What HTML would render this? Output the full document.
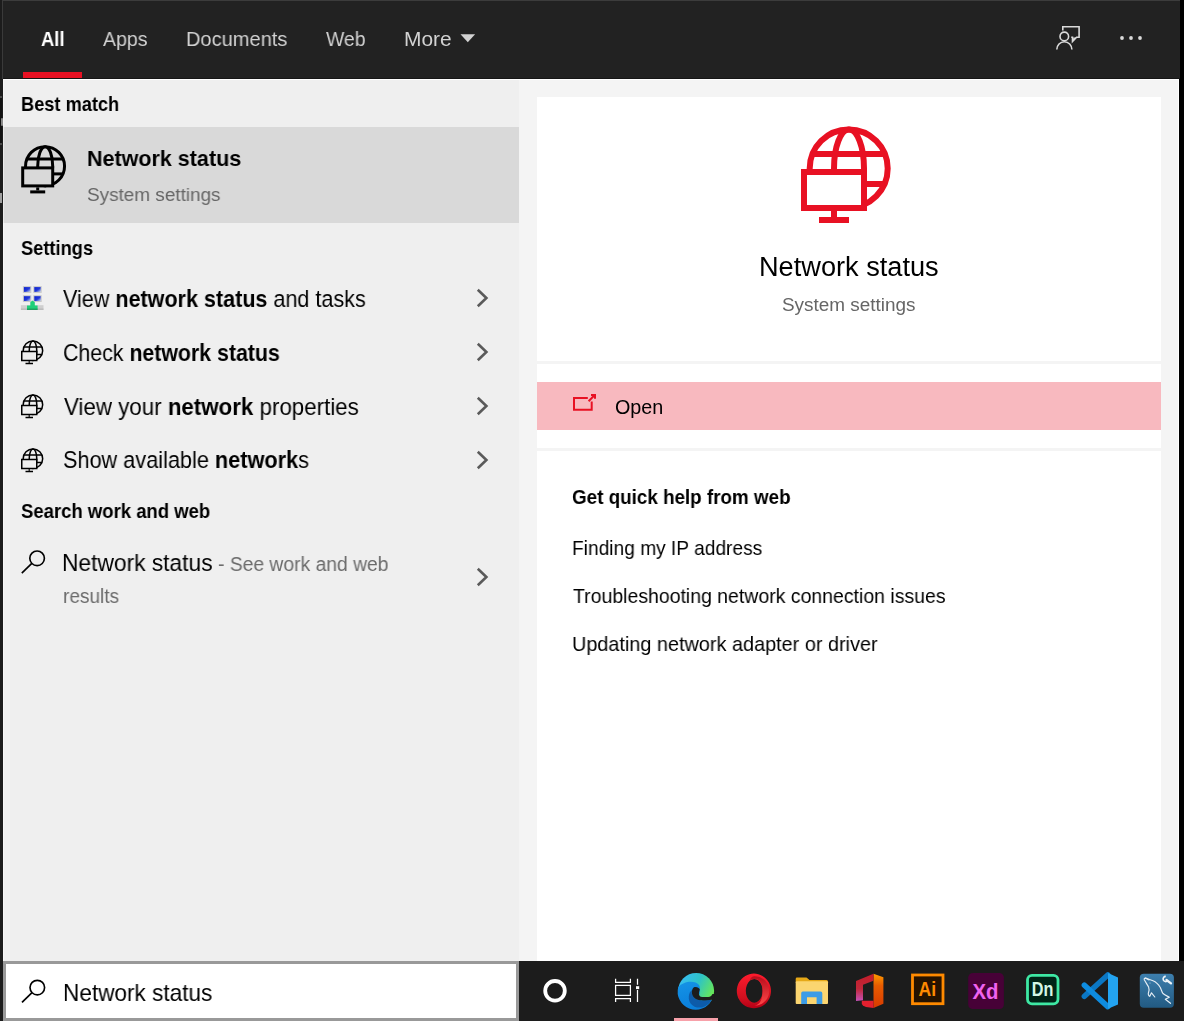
<!DOCTYPE html>
<html><head><meta charset="utf-8"><style>
*{margin:0;padding:0;box-sizing:border-box}
html,body{width:1184px;height:1021px;overflow:hidden;background:#1b1b1b;position:relative;font-family:"Liberation Sans",sans-serif}
.a{position:absolute}
.t{position:absolute;line-height:1;white-space:nowrap;transform-origin:0 0;will-change:transform}
.t b{font-weight:700}
svg{position:absolute;overflow:visible}


</style></head><body>
<!-- outer frame -->
<div class="a" style="left:0;top:0;width:3px;height:1021px;background:#1c1c1c"></div>
<div class="a" style="left:0;top:97px;width:2px;height:47px;background:#121212"></div>
<div class="a" style="left:0;top:96px;width:2px;height:2px;background:#4a4a4a"></div>
<div class="a" style="left:1px;top:118px;width:2px;height:8px;background:#8a8a8a;border-radius:1px"></div>
<div class="a" style="left:0;top:143px;width:2px;height:2px;background:#4a4a4a"></div>
<div class="a" style="left:0;top:193px;width:2px;height:10px;background:#a0a0a0"></div>
<div class="a" style="left:1179px;top:0;width:5px;height:961px;background:#000"></div>
<!-- header -->
<div class="a" style="left:2px;top:0;width:1178px;height:79px;background:#222222;border-left:1px solid #3a3a3a;border-top:1px solid #3c3c3c"></div>
<div class="a" style="left:3px;top:78px;width:1177px;height:1px;background:#161616"></div>
<div class="a" style="left:23px;top:72px;width:59px;height:6px;background:#e81123"></div>
<!-- tab triangle -->
<svg style="left:0;top:0" width="1184" height="80"><path d="M460.5 34.3 L475.1 34.3 L467.8 42.3 Z" fill="#d2d2d2"/></svg>
<!-- feedback icon + dots -->
<svg style="left:0;top:0" width="1184" height="80" fill="none" stroke="#dadada" stroke-width="1.6">
 <path d="M1062.8 30.6 V26.7 H1079.1 V37.3 H1076.6 L1072.5 41.6 V37.3 H1071.2"/>
 <path d="M1073.3 37.6 L1076.3 37.6 L1072.9 41.2 Z" fill="#dadada" stroke="none"/>
 <circle cx="1064.3" cy="36.4" r="4.3"/>
 <path d="M1056.8 49.6 A7.55 7.9 0 0 1 1071.9 49.6"/>
 <circle cx="1122" cy="38" r="1.9" fill="#dadada" stroke="none"/>
 <circle cx="1131" cy="38" r="1.9" fill="#dadada" stroke="none"/>
 <circle cx="1140" cy="38" r="1.9" fill="#dadada" stroke="none"/>
</svg>
<!-- left panel -->
<div class="a" style="left:3px;top:79px;width:516px;height:882px;background:#efefef;border-top:1px solid #fff"></div>
<div class="a" style="left:3px;top:127px;width:516px;height:96px;background:#d9d9d9"></div>
<div class="a" style="left:3px;top:80px;width:1px;height:881px;background:rgba(255,255,255,0.45)"></div>
<!-- right panel -->
<div class="a" style="left:519px;top:79px;width:660px;height:882px;background:#f4f4f4;border-top:1px solid #fff;border-right:1px solid #fff"></div>
<div class="a" style="left:537px;top:97px;width:624px;height:264px;background:#fff"></div>
<div class="a" style="left:537px;top:364px;width:624px;height:84px;background:#fff"></div>
<div class="a" style="left:537px;top:382px;width:624px;height:48px;background:#f8b9bf"></div>
<div class="a" style="left:537px;top:451px;width:624px;height:510px;background:#fff"></div>
<!-- taskbar -->
<div class="a" style="left:0;top:961px;width:1184px;height:60px;background:#1c1c1c"></div>
<div class="a" style="left:3px;top:961px;width:516px;height:60px;background:#fff;border:3px solid #999"></div>

<svg style="left:0;top:0" width="1184" height="1021"><g transform="translate(801 126) scale(1.0)" fill="none" stroke="#e81123" stroke-width="6">
<circle cx="47.7" cy="42.5" r="39"/>
<ellipse cx="48" cy="42.5" rx="15" ry="39"/>
<line x1="11.5" y1="28" x2="83.9" y2="28"/>
<line x1="63" y1="58" x2="83.5" y2="58"/>
<rect x="3" y="46" width="60" height="36" fill="#fff"/>
<rect x="30" y="85" width="6" height="6" fill="#e81123" stroke="none"/>
<rect x="18" y="91" width="30" height="6" fill="#e81123" stroke="none"/>
</g></svg>
<svg style="left:0;top:0" width="1184" height="1021"><g transform="translate(21.2 144.9) scale(0.5)" fill="none" stroke="#000" stroke-width="6">
<circle cx="47.7" cy="42.5" r="39"/>
<ellipse cx="48" cy="42.5" rx="15" ry="39"/>
<line x1="11.5" y1="28" x2="83.9" y2="28"/>
<line x1="63" y1="58" x2="83.5" y2="58"/>
<rect x="3" y="46" width="60" height="36" fill="#d9d9d9"/>
<rect x="30" y="85" width="6" height="6" fill="#000" stroke="none"/>
<rect x="18" y="91" width="30" height="6" fill="#000" stroke="none"/>
</g></svg>
<svg style="left:0;top:0" width="1184" height="1021"><g transform="translate(21 340) scale(0.25)" fill="none" stroke="#000" stroke-width="6">
<circle cx="47.7" cy="42.5" r="39"/>
<ellipse cx="48" cy="42.5" rx="15" ry="39"/>
<line x1="11.5" y1="28" x2="83.9" y2="28"/>
<line x1="63" y1="58" x2="83.5" y2="58"/>
<rect x="3" y="46" width="60" height="36" fill="#efefef"/>
<rect x="30" y="85" width="6" height="6" fill="#000" stroke="none"/>
<rect x="18" y="91" width="30" height="6" fill="#000" stroke="none"/>
</g></svg>
<svg style="left:0;top:0" width="1184" height="1021"><g transform="translate(21 394) scale(0.25)" fill="none" stroke="#000" stroke-width="6">
<circle cx="47.7" cy="42.5" r="39"/>
<ellipse cx="48" cy="42.5" rx="15" ry="39"/>
<line x1="11.5" y1="28" x2="83.9" y2="28"/>
<line x1="63" y1="58" x2="83.5" y2="58"/>
<rect x="3" y="46" width="60" height="36" fill="#efefef"/>
<rect x="30" y="85" width="6" height="6" fill="#000" stroke="none"/>
<rect x="18" y="91" width="30" height="6" fill="#000" stroke="none"/>
</g></svg>
<svg style="left:0;top:0" width="1184" height="1021"><g transform="translate(21 448) scale(0.25)" fill="none" stroke="#000" stroke-width="6">
<circle cx="47.7" cy="42.5" r="39"/>
<ellipse cx="48" cy="42.5" rx="15" ry="39"/>
<line x1="11.5" y1="28" x2="83.9" y2="28"/>
<line x1="63" y1="58" x2="83.5" y2="58"/>
<rect x="3" y="46" width="60" height="36" fill="#efefef"/>
<rect x="30" y="85" width="6" height="6" fill="#000" stroke="none"/>
<rect x="18" y="91" width="30" height="6" fill="#000" stroke="none"/>
</g></svg>
<svg style="left:0;top:0" width="1184" height="1021" fill="none" stroke="#5a5a5a" stroke-width="2.6"><path d="M477.79999999999995 289.7 L486.4 298 L477.79999999999995 306.3" /><path d="M477.79999999999995 343.7 L486.4 352 L477.79999999999995 360.3" /><path d="M477.79999999999995 397.7 L486.4 406 L477.79999999999995 414.3" /><path d="M477.79999999999995 451.7 L486.4 460 L477.79999999999995 468.3" /><path d="M477.79999999999995 568.7 L486.4 577 L477.79999999999995 585.3" /></svg>
<svg style="left:0;top:0" width="1184" height="1021"><g transform="translate(20.9 550.1)" fill="none" stroke="#000" stroke-width="1.65">
<circle cx="16.2" cy="8.2" r="7.3"/>
<line x1="0.9" y1="23" x2="10.9" y2="13.3"/>
</g></svg>
<svg style="left:0;top:0" width="1184" height="1021"><g transform="translate(21.1 979.4)" fill="none" stroke="#000" stroke-width="1.65">
<circle cx="16.2" cy="8.2" r="7.3"/>
<line x1="0.9" y1="23" x2="10.9" y2="13.3"/>
</g></svg>
<svg style="left:0;top:0" width="1184" height="1021" fill="none" stroke="#e81123" stroke-width="2">
<path d="M587.8 397.9 H574 V409.7 H591.7 V401.5"/>
<path d="M588.6 401.2 L595 394.8"/>
<path d="M591 394.9 H595 V398.7" stroke-width="2"/>
</svg>
<svg style="left:0;top:0" width="1184" height="1021">
<defs><linearGradient id="nmg" x1="0" y1="0" x2="1" y2="1"><stop offset="0" stop-color="#0a1fd0"/><stop offset="0.55" stop-color="#2238d8"/><stop offset="1" stop-color="#c8d8f0"/></linearGradient></defs>
<rect x="22.9" y="286.1" width="8.4" height="6.8" fill="#c8c8c8"/><rect x="23.9" y="287.1" width="6.4" height="4.8" fill="url(#nmg)"/><rect x="33.3" y="286.1" width="8.4" height="6.8" fill="#c8c8c8"/><rect x="34.3" y="287.1" width="6.4" height="4.8" fill="url(#nmg)"/><rect x="22.9" y="295.2" width="8.4" height="6.8" fill="#c8c8c8"/><rect x="23.9" y="296.2" width="6.4" height="4.8" fill="url(#nmg)"/><rect x="33.3" y="295.2" width="8.4" height="6.8" fill="#c8c8c8"/><rect x="34.3" y="296.2" width="6.4" height="4.8" fill="url(#nmg)"/>
<rect x="20.9" y="305.2" width="22.6" height="4.5" fill="#cfcfcf"/>
<rect x="20.9" y="308.6" width="22.6" height="1.2" fill="#b5b5b5"/>
<path d="M27 305.4 H30.3 V302.2 L32.5 300.6 L34.8 302.2 V305.4 H37.6 V309.7 H27 Z" fill="#1fcf78"/>
<rect x="27" y="308.7" width="10.6" height="1" fill="#138a50"/>
</svg>
<svg style="left:0;top:0" width="1184" height="1021">
<defs>
 <linearGradient id="edgeTop" x1="0.1" y1="0.1" x2="0.95" y2="0.55"><stop offset="0" stop-color="#36bdf3"/><stop offset="0.5" stop-color="#2ec3c6"/><stop offset="1" stop-color="#66e65a"/></linearGradient>
 <linearGradient id="edgeBlue" x1="0" y1="0" x2="0.3" y2="1"><stop offset="0" stop-color="#1593e6"/><stop offset="1" stop-color="#0a7fdb"/></linearGradient>
 <linearGradient id="opera" x1="0" y1="0" x2="0" y2="1"><stop offset="0" stop-color="#ff1b2d"/><stop offset="0.7" stop-color="#d0101f"/><stop offset="1" stop-color="#b50016"/></linearGradient>
 <linearGradient id="operaIn" x1="0" y1="0" x2="0" y2="1"><stop offset="0" stop-color="#b80d1c"/><stop offset="1" stop-color="#ff4848"/></linearGradient>
 <linearGradient id="offR" x1="0" y1="0" x2="0" y2="1"><stop offset="0" stop-color="#ff9a00"/><stop offset="0.35" stop-color="#e85b00"/><stop offset="1" stop-color="#d83b01"/></linearGradient>
 <linearGradient id="offL" x1="0" y1="0" x2="0" y2="1"><stop offset="0" stop-color="#c41b28"/><stop offset="0.55" stop-color="#c0283a"/><stop offset="1" stop-color="#c551b8"/></linearGradient>
 <linearGradient id="mysql" x1="0" y1="0" x2="0" y2="1"><stop offset="0" stop-color="#3d7fae"/><stop offset="1" stop-color="#225a82"/></linearGradient>
</defs>
<!-- cortana -->
<circle cx="555" cy="990.8" r="9.8" fill="none" stroke="#ffffff" stroke-width="3.8"/>
<!-- task view -->
<g fill="none" stroke="#fff" stroke-width="1.25">
 <path d="M615.6 978.8 V982.4 H630.4 V978.8"/>
 <rect x="615.6" y="985.4" width="14.8" height="10"/>
 <path d="M615.6 1002 V998.6 H630.4 V1002"/>
 <path d="M637.5 978.8 V984.8 M637.5 990 V1002"/>
</g>
<rect x="636" y="986.2" width="3.2" height="2.9" fill="#fff"/>
<!-- edge -->
<g transform="translate(696.1 990.9)">
 <circle r="18" fill="url(#edgeTop)"/>
 <path d="M-17.8 -3.9 C-14 -8.5 -6 -10.5 -0.5 -8.5 C2 -7.5 3.5 -5.5 3.7 -3.9 L3.7 3 L-2 7 L4 9.4 L15.6 9 A18 18 0 0 1 -17.8 -3.9 Z" fill="url(#edgeBlue)"/>
 <path d="M-4.1 -1 C-7.8 1.5 -8.3 8.5 -5.5 12.5 C-3 15.8 1 17 5 16.6 C9.5 16 13.5 12.5 15.6 8.8 C12 9.6 7 9.8 3.9 9.4 C1 9 -2 7.5 -3.5 5 C-4.5 3 -4.6 1 -4.1 -1 Z" fill="#0d5ba9"/>
 <path d="M-1.5 -3.9 C1.5 -4.2 3.7 -2.5 3.7 -1.3 C3.3 0.5 2.6 2 2.9 3.3 C3.2 5 4 5.8 6 6 L12.3 6.1 C14 6 15.5 5 16.4 3.1 L18.5 3.1 L18.5 9.5 L15.6 8.8 C12 9.5 7 9.6 3.9 9.4 C0.5 9 -2.5 7 -3.6 4.5 C-4.6 2 -4.4 -0.5 -3.3 -2.3 C-2.8 -3.2 -2.2 -3.7 -1.5 -3.9 Z" fill="#1c1c1c"/>
</g>
<!-- opera -->
<path fill-rule="evenodd" fill="url(#opera)" d="M753.9 973.6 A17.1 17.3 0 1 1 753.89 973.6 Z M754.2 979 A8.4 11.85 0 1 0 754.21 979 Z"/>
<path fill-rule="evenodd" fill="url(#operaIn)" d="M754.2 976.2 C763 976.2 769.2 982.5 769.2 990.9 C769.2 999.3 762.5 1005.6 754.2 1005.6 C761 1005 762.6 997 762.6 990.9 C762.6 984 760.5 978.5 754.2 979 C752 979 750.5 979.8 749.4 980.5 C750.6 977.6 752.6 976.2 754.2 976.2 Z"/>
<!-- folder -->
<path d="M795.7 979 Q795.7 977.6 797 977.6 H806.5 L809.5 980 H826.5 Q828 980 828 981.5 V982.6 H795.7 Z" fill="#e6a817"/>
<rect x="795.7" y="981.3" width="32.3" height="22.7" rx="1" fill="#fbd570"/>
<path d="M801.2 1004 V993.2 Q801.2 991.6 802.8 991.6 H820.7 Q822.3 991.6 822.3 993.2 V1004 H816.6 V997.3 H807 V1004 Z" fill="#3c9ce6"/>
<!-- office -->
<path d="M873.5 973.8 L883.4 977.2 V1003.8 L873.5 1007.9 Z" fill="url(#offR)"/>
<path d="M856 981 L873.5 973.8 V980.8 L863 984.8 V1000.2 L856 1001 Z" fill="url(#offL)"/>
<path d="M861.8 1000.8 L873.5 1000.8 V1007.9 L866 1007 Q862.5 1006 861.8 1004 Z" fill="#e3202f"/>
<!-- Ai -->
<rect x="912.5" y="975" width="30.5" height="28.7" fill="#261300" stroke="#ff8a00" stroke-width="2.8"/>
<text x="918.6" y="996" font-family="Liberation Sans" font-weight="700" font-size="20.5" fill="#ff8a00" textLength="17.6" lengthAdjust="spacingAndGlyphs">Ai</text>
<!-- Xd -->
<rect x="968.2" y="973.1" width="35.7" height="35.9" rx="4.5" fill="#470137"/>
<text x="972.4" y="998.8" font-family="Liberation Sans" font-weight="700" font-size="21.5" fill="#f163f0" textLength="26" lengthAdjust="spacingAndGlyphs">Xd</text>
<!-- Dn -->
<rect x="1027.5" y="975.3" width="30.5" height="28.5" rx="4.5" fill="#002417" stroke="#3ee8a4" stroke-width="2.8"/>
<text x="1031.8" y="995.9" font-family="Liberation Sans" font-weight="700" font-size="20" fill="#d4f7e6" textLength="21.6" lengthAdjust="spacingAndGlyphs">Dn</text>
<!-- vscode -->
<path d="M1107.8 975 L1084.4 996.3" stroke="#0b77c4" stroke-width="5.6" stroke-linecap="round"/>
<path d="M1084.4 985.2 L1107.8 1006.6" stroke="#0e8ce0" stroke-width="5.6" stroke-linecap="round"/>
<path d="M1108 973 L1118 977.4 V1004.6 L1108 1008.8 Z" fill="#23a3f0"/>
<!-- mysql -->
<rect x="1139.8" y="973.7" width="34.1" height="34" rx="4" fill="url(#mysql)"/>
<g fill="none" stroke="#e6eef5" stroke-width="1.15" stroke-linejoin="round" stroke-linecap="round">
 <path d="M1149 980 C1147.5 979 1146.5 978.3 1145.5 978.1 C1144.4 978 1144 979 1144.3 979.8 C1145.5 982 1147.5 985 1148.6 987 C1149.5 989 1149 991.5 1148.3 993.5 C1148.3 995 1149 996.5 1149.8 996.3 L1151.5 992.8 L1154.8 997"/>
 <path d="M1145.5 978.1 C1148.5 979 1151 980 1153 980.8 C1156 982 1158.5 984.5 1160.3 987.5 C1161.3 989.5 1161.8 992 1163 993.5 C1164.5 995 1167 996 1169.3 997.2 L1165.3 999.3 L1170.5 1003.3"/>
</g>
<circle cx="1150" cy="983" r="0.5" fill="#cfe0ee"/>
<path d="M1166.5 980 L1171 983.4" stroke="#eef4f8" stroke-width="2.3" stroke-linecap="round"/>
<path d="M1167.6 980.8 A2.6 2.6 0 1 1 1165.8 976.4" fill="none" stroke="#eef4f8" stroke-width="1.6"/>
<!-- edge active underline -->
<rect x="674" y="1018" width="44" height="3" fill="#f7a1aa"/>
</svg>

<div class="t" id="tab_all" style="left:40.8px;top:29.2px;font-size:20.93px;font-weight:700;color:#ffffff;transform:scaleX(0.8800);">All</div>
<div class="t" id="tab_apps" style="left:103.0px;top:29.3px;font-size:20.93px;font-weight:400;color:#d2d2d2;transform:scaleX(0.9340);">Apps</div>
<div class="t" id="tab_docs" style="left:185.5px;top:29.3px;font-size:20.93px;font-weight:400;color:#d2d2d2;transform:scaleX(0.9583);">Documents</div>
<div class="t" id="tab_web" style="left:326.0px;top:29.3px;font-size:20.93px;font-weight:400;color:#d2d2d2;transform:scaleX(0.9286);">Web</div>
<div class="t" id="tab_more" style="left:404.3px;top:29.3px;font-size:20.93px;font-weight:400;color:#d2d2d2;transform:scaleX(1.0000);">More</div>
<div class="t" id="best" style="left:21.2px;top:93.6px;font-size:20.64px;font-weight:700;color:#000000;transform:scaleX(0.8835);">Best match</div>
<div class="t" id="bm_title" style="left:87.3px;top:147.5px;font-size:22.53px;font-weight:700;color:#000000;transform:scaleX(0.9550);">Network status</div>
<div class="t" id="bm_sub" style="left:86.9px;top:184.8px;font-size:19.19px;font-weight:400;color:#666666;transform:scaleX(0.9858);">System settings</div>
<div class="t" id="settings" style="left:20.8px;top:238.3px;font-size:20.64px;font-weight:700;color:#000000;transform:scaleX(0.8850);">Settings</div>
<div class="t" id="r1" style="left:63.1px;top:288.3px;font-size:23.26px;font-weight:400;color:#000000;transform:scaleX(0.9270);">View <b>network status</b> and tasks</div>
<div class="t" id="r2" style="left:62.6px;top:342.3px;font-size:23.26px;font-weight:400;color:#000000;transform:scaleX(0.9170);">Check <b>network status</b></div>
<div class="t" id="r3" style="left:64.1px;top:395.5px;font-size:23.26px;font-weight:400;color:#000000;transform:scaleX(0.9598);">View your <b>network</b> properties</div>
<div class="t" id="r4" style="left:63.1px;top:449.3px;font-size:23.26px;font-weight:400;color:#000000;transform:scaleX(0.9332);">Show available <b>network</b>s</div>
<div class="t" id="sww" style="left:20.9px;top:500.8px;font-size:20.64px;font-weight:700;color:#000000;transform:scaleX(0.8971);">Search work and web</div>
<div class="t" id="ns" style="left:62.0px;top:551.5px;font-size:23.26px;font-weight:400;color:#000000;transform:scaleX(0.9788);">Network status</div>
<div class="t" id="see" style="left:217.8px;top:554.5px;font-size:19.91px;font-weight:400;color:#6b6b6b;transform:scaleX(0.9690);">- See work and web</div>
<div class="t" id="results" style="left:63.0px;top:586.7px;font-size:19.91px;font-weight:400;color:#6b6b6b;transform:scaleX(0.9544);">results</div>
<div class="t" id="rp_title" style="left:759.0px;top:252.9px;font-size:27.18px;font-weight:400;color:#000000;transform:scaleX(0.9989);">Network status</div>
<div class="t" id="rp_sub" style="left:782.0px;top:296.2px;font-size:18.90px;font-weight:400;color:#666666;transform:scaleX(1.0015);">System settings</div>
<div class="t" id="open" style="left:614.7px;top:398.2px;font-size:19.33px;font-weight:400;color:#000000;transform:scaleX(1.0222);">Open</div>
<div class="t" id="gqh" style="left:572.4px;top:487.3px;font-size:20.93px;font-weight:700;color:#000000;transform:scaleX(0.8996);">Get quick help from web</div>
<div class="t" id="l1" style="left:572.1px;top:537.5px;font-size:20.64px;font-weight:400;color:#000000;transform:scaleX(0.9287);">Finding my IP address</div>
<div class="t" id="l2" style="left:573.3px;top:585.6px;font-size:20.64px;font-weight:400;color:#000000;transform:scaleX(0.9437);">Troubleshooting network connection issues</div>
<div class="t" id="l3" style="left:572.3px;top:633.5px;font-size:20.64px;font-weight:400;color:#000000;transform:scaleX(0.9623);">Updating network adapter or driver</div>
<div class="t" id="sb" style="left:62.9px;top:982.0px;font-size:23.40px;font-weight:400;color:#000000;transform:scaleX(0.9651);">Network status</div>
</body></html>
